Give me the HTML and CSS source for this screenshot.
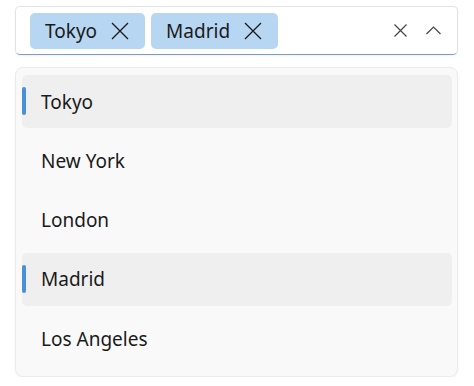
FILE: index.html
```html
<!DOCTYPE html>
<html lang="en">
	<head>
		<meta charset="utf-8">
		<title>City picker</title>
		<link rel="stylesheet" href="styles.css">
	</head>
	<body>
		<div class="picker">
			<div class="combo">
				<div class="chips">
					<span class="chip">Tokyo
						<svg class="chip-x" width="18" height="18" viewBox="0 0 18 18"><path d="M1 1L17 17M17 1L1 17" stroke="#1b1b1b" stroke-width="1.3" fill="none"/></svg>
					</span>
					<span class="chip">Madrid
						<svg class="chip-x" width="18" height="18" viewBox="0 0 18 18"><path d="M1 1L17 17M17 1L1 17" stroke="#1b1b1b" stroke-width="1.3" fill="none"/></svg>
					</span>
				</div>
				<div class="actions">
					<svg width="13" height="13" viewBox="0 0 13 13"><path d="M0.5 0.5L12.5 12.5M12.5 0.5L0.5 12.5" stroke="#444" stroke-width="1.2" fill="none"/></svg>
					<svg width="15" height="9" viewBox="0 0 15 9"><path d="M0.5 8L7.5 1L14.5 8" stroke="#444" stroke-width="1.2" fill="none"/></svg>
				</div>
			</div>
			<ul class="list">
				<li class="item selected">Tokyo</li>
				<li class="item">New York</li>
				<li class="item">London</li>
				<li class="item selected">Madrid</li>
				<li class="item">Los Angeles</li>
			</ul>
		</div>
	</body>
</html>
```
FILE: styles.css
```css
body{
	margin: 0;
	background: #fff;
	font-family: "Noto Sans", "Open Sans", sans-serif;
	color: #1a1a1a;
}

.picker{
	padding: 6px 16px 0 15px;
}

.combo{
	height: 47px;
	display: flex;
	align-items: center;
	border: 1px solid #e3e3e3;
	border-bottom: 1px solid #7f9cbb;
	border-radius: 5px;
	background: #fff;
	box-shadow: 0 1px 2px rgba(0,0,0,0.06);
	padding: 0 16px 0 14px;
}

.chips{
	display: flex;
	gap: 6px;
	flex: 1;
}

.chip{
	display: flex;
	align-items: center;
	gap: 14px;
	height: 36px;
	padding: 0 16px 0 15px;
	border-radius: 5px;
	background: #b7d6f2;
	font-size: 19px;
}

.actions{
	display: flex;
	align-items: center;
	gap: 19px;
}

.list{
	list-style: none;
	margin: 12px 0 0 0;
	padding: 7px 5px 11px 6px;
	background: #f9f9f9;
	border: 1px solid #ebebeb;
	border-radius: 8px;
	box-shadow: 0 1px 3px rgba(0,0,0,0.04);
	display: flex;
	flex-direction: column;
	gap: 6.3px;
}

.item{
	position: relative;
	height: 53px;
	display: flex;
	align-items: center;
	padding-left: 19px;
	border-radius: 5px;
	font-size: 19px;
}

.item.selected{
	background: #efefef;
}

.item.selected::before{
	content: "";
	position: absolute;
	left: 0;
	top: 12px;
	width: 4px;
	height: 28px;
	border-radius: 2px;
	background: #4a8fd9;
}
```
